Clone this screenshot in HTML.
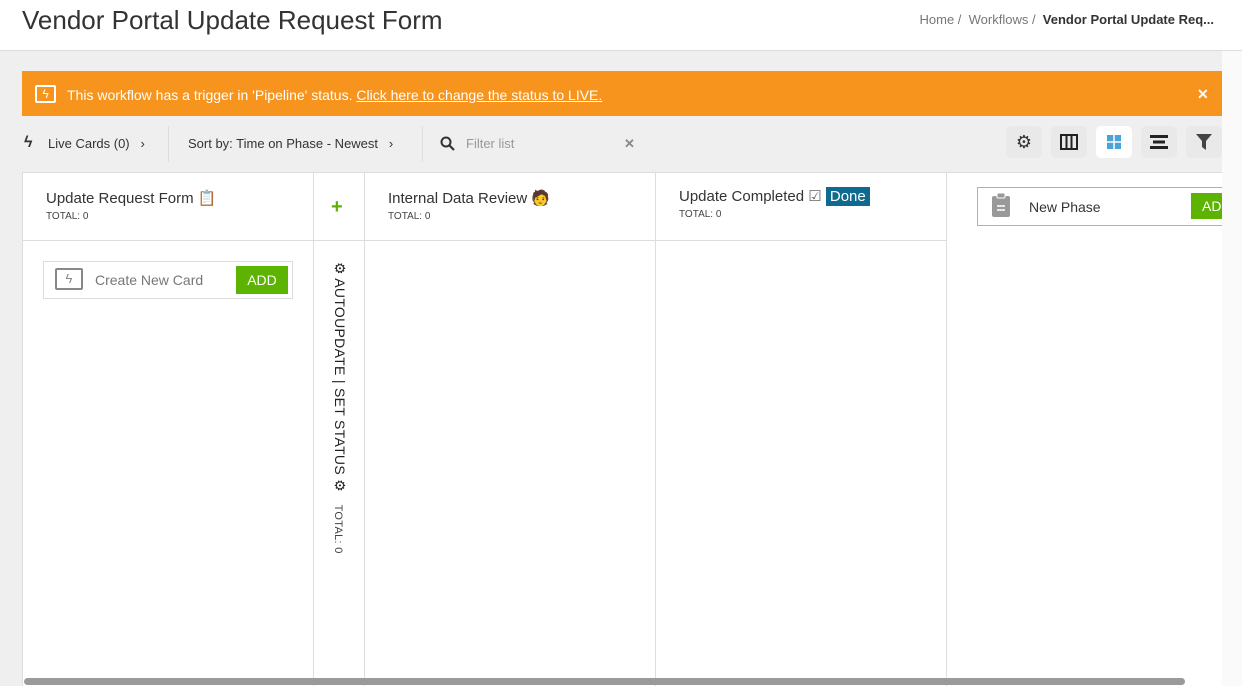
<!DOCTYPE html>
<html><head><style>
*{box-sizing:border-box;margin:0;padding:0}
body{width:1242px;height:686px;overflow:hidden;background:#efefef;font-family:"Liberation Sans",sans-serif;color:#333;position:relative}
.abs{position:absolute}
.hdr{left:0;top:0;width:1242px;height:51px;background:#fff;border-bottom:1px solid #ddd}
.btn{width:36px;height:32px;background:#e9e9e9;border-radius:5px;top:126px;display:flex;align-items:center;justify-content:center}
.vl{top:172px;height:514px;width:1px;background:#ddd}
.ch{font-size:15px;color:#333}
.tot{font-size:10px;color:#444;margin-top:4px}
</style></head><body>
<div class="abs hdr"></div>
<div class="abs" style="left:22px;top:5px;font-size:26px;color:#333">Vendor Portal Update Request Form</div>
<div class="abs" style="right:28px;top:12px;font-size:13px;color:#777">Home / &nbsp;Workflows / &nbsp;<b style="color:#333">Vendor Portal Update Req...</b></div>

<div class="abs" style="left:22px;top:71px;width:1200px;height:45px;background:#f7941d"></div>
<div class="abs" style="left:35px;top:85px;width:21px;height:18px;border:2px solid #fff;border-radius:2px;color:#fff;font-size:12px;text-align:center;line-height:14px">ϟ</div>
<div class="abs" style="left:67px;top:87px;font-size:14px;color:#fff">This workflow has a trigger in 'Pipeline' status. <u>Click here to change the status to LIVE.</u></div>
<div class="abs" style="left:1197px;top:86px;font-size:14px;color:#fff;font-weight:bold">✕</div>

<div class="abs" style="left:24px;top:134px;font-size:16px;font-weight:bold">ϟ</div>
<div class="abs" style="left:48px;top:136px;font-size:13px">Live Cards (0) &nbsp;&nbsp;›</div>
<div class="abs" style="left:168px;top:126px;width:1px;height:36px;background:#ddd"></div>
<div class="abs" style="left:188px;top:136px;font-size:13px">Sort by: Time on Phase - Newest &nbsp;&nbsp;›</div>
<div class="abs" style="left:422px;top:126px;width:1px;height:36px;background:#ddd"></div>
<svg class="abs" style="left:440px;top:136px" width="15" height="15"><circle cx="6" cy="6" r="4.5" stroke="#333" stroke-width="2" fill="none"/><line x1="9.5" y1="9.5" x2="14" y2="14" stroke="#333" stroke-width="2.2"/></svg>
<div class="abs" style="left:466px;top:136px;font-size:13px;color:#999">Filter list</div>
<div class="abs" style="left:624px;top:136px;font-size:13px;color:#888;font-weight:bold">✕</div>

<div class="abs btn" style="left:1006px;font-size:18px">⚙</div>
<div class="abs btn" style="left:1051px"><svg width="18" height="16"><rect x="1" y="1" width="16" height="14" fill="none" stroke="#222" stroke-width="2"/><line x1="6.5" y1="1" x2="6.5" y2="15" stroke="#222" stroke-width="2"/><line x1="11.5" y1="1" x2="11.5" y2="15" stroke="#222" stroke-width="2"/></svg></div>
<div class="abs btn" style="left:1096px;background:#fff"><svg width="16" height="16"><rect x="1" y="1" width="14" height="14" fill="#4aa3d9"/><line x1="8" y1="1" x2="8" y2="15" stroke="#fff" stroke-width="1.5"/><line x1="1" y1="8" x2="15" y2="8" stroke="#fff" stroke-width="1.5"/></svg></div>
<div class="abs btn" style="left:1141px"><svg width="18" height="14"><rect x="0" y="0" width="18" height="3" fill="#222"/><rect x="3" y="5.5" width="12" height="3" fill="#222"/><rect x="0" y="11" width="18" height="3" fill="#222"/></svg></div>
<div class="abs btn" style="left:1186px"><svg width="16" height="16"><path d="M0 0H16L10 7V16L6 13V7Z" fill="#444"/></svg></div>

<div class="abs" style="left:22px;top:172px;width:1200px;height:514px;background:#fff;border-top:1px solid #ddd"></div>
<div class="abs vl" style="left:22px"></div>
<div class="abs vl" style="left:313px"></div>
<div class="abs vl" style="left:364px"></div>
<div class="abs vl" style="left:655px"></div>
<div class="abs vl" style="left:946px"></div>
<div class="abs" style="left:22px;top:240px;width:925px;height:1px;background:#ddd"></div>

<div class="abs" style="left:46px;top:189px"><div class="ch">Update Request Form 📋</div><div class="tot">TOTAL: 0</div></div>
<div class="abs" style="left:331px;top:196px;font-size:20px;color:#5cb300;font-weight:bold">+</div>
<div class="abs" style="left:388px;top:189px"><div class="ch">Internal Data Review 🧑</div><div class="tot">TOTAL: 0</div></div>
<div class="abs" style="left:679px;top:187px"><div class="ch">Update Completed <span style="color:#666">☑</span> <span style="background:#0e6a8f;color:#fff;padding:1px 4px">Done</span></div><div class="tot">TOTAL: 0</div></div>

<div class="abs" style="left:43px;top:261px;width:250px;height:38px;border:1px solid #ddd;background:#fff"></div>
<div class="abs" style="left:55px;top:268px;width:28px;height:22px;border:2px solid #888;border-radius:2px;color:#888;font-size:13px;text-align:center;line-height:18px">ϟ</div>
<div class="abs" style="left:95px;top:272px;font-size:14px;color:#777">Create New Card</div>
<div class="abs" style="left:236px;top:266px;width:52px;height:28px;background:#5cb300;color:#fff;font-size:14px;text-align:center;line-height:28px">ADD</div>

<div class="abs" style="left:330px;top:262px;width:300px;height:20px;transform-origin:0 0;transform:translate(18px,0) rotate(90deg);font-size:14px;white-space:nowrap;letter-spacing:.3px;color:#222">⚙ AUTOUPDATE | SET STATUS ⚙ &nbsp;&nbsp;<span style="font-size:11px;color:#444">TOTAL: 0</span></div>

<div class="abs" style="left:977px;top:187px;width:245px;height:39px;border:1px solid #9acd5a;border-right:none;background:#fff"></div>
<svg class="abs" style="left:991px;top:193px" width="20" height="25"><rect x="1" y="3" width="18" height="21" rx="2" fill="#999"/><rect x="6" y="0" width="8" height="5" rx="1" fill="#999" stroke="#fff"/><line x1="6" y1="13" x2="14" y2="13" stroke="#fff" stroke-width="1.5"/><line x1="6" y1="17" x2="14" y2="17" stroke="#fff" stroke-width="1.5"/></svg>
<div class="abs" style="left:1029px;top:199px;font-size:14px;color:#333">New Phase</div>
<div class="abs" style="left:1191px;top:193px;width:31px;height:26px;background:#5cb300;color:#fff;font-size:14px;line-height:26px;padding-left:11px;overflow:hidden">AD</div>

<div class="abs" style="left:1222px;top:51px;width:20px;height:635px;background:#fafafa"></div>
<div class="abs" style="left:24px;top:678px;width:1161px;height:7px;border-radius:4px;background:#9a9a9a"></div>
</body></html>
